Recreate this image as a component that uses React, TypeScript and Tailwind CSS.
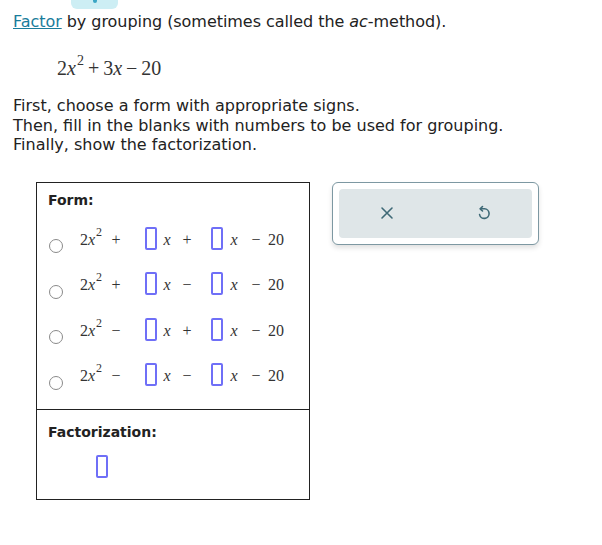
import React from 'react';

const sans = { fontFamily: '"DejaVu Sans", Verdana, sans-serif' };
const serif = { fontFamily: '"Liberation Serif", "Times New Roman", serif' };

// one blank answer slot
function Blank() {
  return <span className="inline-block w-[12px] h-[23px] border-2 border-[#6f6ff7] rounded-[2px] bg-white" />;
}

type Row = { s1: string; s2: string };

const rows: Row[] = [
  { s1: '+', s2: '+' },
  { s1: '+', s2: '−' },
  { s1: '−', s2: '+' },
  { s1: '−', s2: '−' },
];

function FormRow({ s1, s2 }: Row) {
  return (
    <div className="flex items-center h-[45.5px] text-[16px] text-[#333]" style={serif}>
      <span className="ml-[12px] mt-[16px] w-[14px] h-[14px] rounded-full border border-[#8a8a8a] bg-white shrink-0" />
      <span className="ml-[17px] w-[22px] mt-[3px] whitespace-nowrap">
        2<i>x</i>
        <sup className="text-[12px] ml-[1px] -top-[9px]">2</sup>
      </span>
      <span className="w-[28px] text-center mt-[3px]">{s1}</span>
      <span className="ml-[15px] flex"><Blank /></span>
      <span className="w-[20px] text-center mt-[3px]"><i>x</i></span>
      <span className="w-[20px] text-center mt-[3px]">{s2}</span>
      <span className="ml-[14px] flex"><Blank /></span>
      <span className="w-[22px] text-center mt-[3px]"><i>x</i></span>
      <span className="w-[22px] text-center mt-[3px]">−</span>
      <span className="ml-[1px] mt-[3px]">20</span>
    </div>
  );
}

export default function App() {
  return (
    <div className="w-[602px] h-[545px] bg-white text-[#222] overflow-hidden" style={sans}>
      {/* top button stub */}
      <div className="ml-[71px] w-[47px] h-[9px] bg-[#cdeef4] rounded-b-[6px] flex justify-center">
        <span className="w-[4px] h-[3px] bg-[#3aa6c4] rounded-b-full" />
      </div>

      <div className="pl-[13px] pt-[3px]">
        <p className="text-[16px] leading-[20px] tracking-[-0.05px]">
          <span className="text-[#1a7c9b] underline">Factor</span> by grouping (sometimes called the <i>ac</i>-method).
        </p>

        <div className="ml-[44px] mt-[24px] text-[20px] text-[#333] leading-[24px] whitespace-nowrap" style={serif}>
          2<i>x</i>
          <sup className="text-[14px] ml-[1px] -top-[10px]">2</sup>
          <span className="mx-[4px]">+</span>3<i>x</i>
          <span className="mx-[4px]">−</span>20
        </div>

        <div className="mt-[16px] text-[16px] leading-[19.5px]">
          <p>First, choose a form with appropriate signs.</p>
          <p>Then, fill in the blanks with numbers to be used for grouping.</p>
          <p>Finally, show the factorization.</p>
        </div>

        <div className="flex items-start mt-[27px]">
          {/* answer box */}
          <div className="ml-[23px] w-[274px] border border-[#222]">
            <div className="h-[226px] pt-[9px]">
              <div className="pl-[11px] text-[14px] font-bold leading-[16px]">Form:</div>
              <div className="mt-[8px]">
                {rows.map((r, i) => <FormRow key={i} {...r} />)}
              </div>
            </div>
            <div className="border-t border-[#222] h-[90px] pt-[14px]">
              <div className="pl-[11px] text-[14px] font-bold leading-[16px]">Factorization:</div>
              <div className="ml-[59px] mt-[15px] flex"><Blank /></div>
            </div>
          </div>

          {/* tool panel */}
          <div className="ml-[22px] w-[207px] h-[63px] border border-[#7d98a2] rounded-[6px] p-[6px] bg-white shadow-[0_3px_5px_rgba(0,0,0,0.12)]">
            <div className="h-full bg-[#dfe6e8] rounded-[4px] flex">
              <button className="flex-1 flex items-center justify-center">
                <svg width="14" height="14" viewBox="0 0 14 14" fill="none" stroke="#3e6976" strokeWidth="1.6" strokeLinecap="round">
                  <path d="M2 2 L12 12 M12 2 L2 12" />
                </svg>
              </button>
              <button className="flex-1 flex items-center justify-center">
                <svg width="14" height="16" viewBox="0 0 14 16" fill="none" stroke="#3e6976" strokeWidth="1.6" strokeLinecap="round" strokeLinejoin="round">
                  <path d="M5.5 1.5 L3.2 3.8 L5.5 6" />
                  <path d="M3.5 3.8 H7.5 A4.8 4.8 0 1 1 2.6 9.6" />
                </svg>
              </button>
            </div>
          </div>
        </div>
      </div>
    </div>
  );
}
